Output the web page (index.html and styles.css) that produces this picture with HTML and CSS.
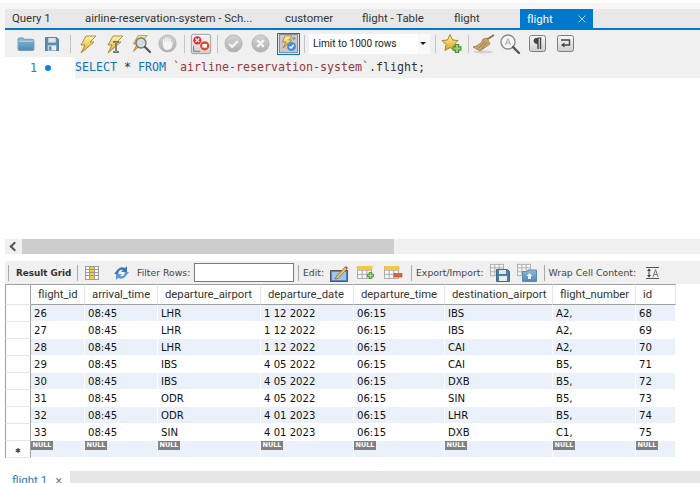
FILE: index.html
```html
<!DOCTYPE html>
<html lang="en">
<head>
<meta charset="utf-8">
<title>MySQL Workbench - flight</title>
<link rel="stylesheet" href="styles.css">
</head>
<body>
<svg class="defs" width="0" height="0" aria-hidden="true">
  <defs>
    <linearGradient id="gBolt" x1="0" y1="0" x2="0" y2="1"><stop offset="0" stop-color="#fff3a8"/><stop offset="1" stop-color="#e0a520"/></linearGradient>
    <linearGradient id="gBlue" x1="0" y1="0" x2="0" y2="1"><stop offset="0" stop-color="#8dbbd8"/><stop offset="1" stop-color="#4f88ae"/></linearGradient>
    <linearGradient id="gGray" x1="0" y1="0" x2="0" y2="1"><stop offset="0" stop-color="#d2d2d2"/><stop offset="1" stop-color="#b0b0b0"/></linearGradient>
    <linearGradient id="gBtn" x1="0" y1="0" x2="0" y2="1"><stop offset="0" stop-color="#f8f8f8"/><stop offset="1" stop-color="#cfcfcf"/></linearGradient>
    <symbol id="bolt" viewBox="0 0 24 24">
      <path d="M11 4H21L15 10H19L6 21L10 13H6Z" fill="url(#gBolt)" stroke="#a5843a" stroke-width=".9" stroke-linejoin="round"/>
    </symbol>
    <symbol id="gridmini" viewBox="0 0 16 14">
      <rect x=".5" y=".5" width="15" height="13" fill="#f4f4f4" stroke="#a8a8a8"/>
      <path d="M.5 4.500H15.500M.5 9H15.500M5.500 .5V13.500M10.500 .5V13.500" stroke="#a8a8a8" fill="none"/>
    </symbol>
  </defs>
</svg>

<div class="app">
  <div class="tabs-wrap">
    <nav class="tabs">
      <span class="tab t-query">Query 1</span>
      <span class="tab t-schema">airline-reservation-system - Sch...</span>
      <span class="tab t-customer">customer</span>
      <span class="tab t-table">flight - Table</span>
      <span class="tab t-flight">flight</span>
      <span class="tab t-active">flight<svg class="tab-close" width="8" height="8" viewBox="0 0 8 8"><path d="M.5 .5L7.500 7.500M7.500 .5L.5 7.500" stroke="#a9d3f2" fill="none"/></svg></span>
    </nav>
  </div>

  <div class="toolbar">
    <span class="btn btn-n"><svg width="18" height="15" viewBox="0 0 18 16"><path d="M.5 3.500Q.5 2 2 2H6L7.500 3.500H16Q17.500 3.500 17.500 5V14Q17.500 15.500 16 15.500H2Q.5 15.500 .5 14Z" fill="url(#gBlue)" stroke="#6f9cb9"/><path d="M1 5.500H17" stroke="#c4deed"/></svg></span>
    <span class="btn btn-n"><svg width="14" height="14" viewBox="0 0 15 15"><path d="M.5 .5H12.500L14.500 2.500V14.500H.5Z" fill="#5f8db0" stroke="#46749a"/><rect x="3.500" y="1" width="8" height="5" fill="#dbe6ee"/><rect x="3" y="9" width="9" height="5.500" fill="#e6eef4"/><rect x="4" y="10" width="3" height="4" fill="#5f8db0"/></svg></span>
    <span class="sep sep-a"></span>
    <span class="btn"><svg width="24" height="24"><use href="#bolt"/></svg></span>
    <span class="btn"><svg width="24" height="24" viewBox="0 0 24 24"><use href="#bolt" width="24" height="24"/><path d="M11 10H17M14 10V20M11 20H17" stroke="#444" stroke-width="1.800" fill="none"/><path d="M11 10H17M14 10V20M11 20H17" stroke="#eee" stroke-width=".6" fill="none"/></svg></span>
    <span class="btn"><svg width="24" height="24" viewBox="0 0 24 24"><use href="#bolt" x="-1" width="22" height="22"/><circle cx="12" cy="11" r="5" fill="#cfe2ee" fill-opacity=".85" stroke="#777" stroke-width="1.400"/><path d="M16 15L21 20" stroke="#555" stroke-width="2.200" stroke-linecap="round"/></svg></span>
    <span class="btn"><svg width="19" height="19" viewBox="0 0 20 20"><circle cx="10" cy="10" r="9" fill="url(#gGray)" stroke="#b4b4b4"/><path d="M6 9V6M8.200 9V4.500M10.400 9V4.500M12.600 9V5.500M6 8V12Q6.500 16 10 16Q14 16 14.500 11V9L12.600 10V9H6Z" stroke="#f4f4f4" stroke-width="1.600" stroke-linecap="round" fill="#f4f4f4"/></svg></span>
    <span class="sep"></span>
    <span class="btn"><svg width="22" height="22" viewBox="0 0 24 24"><rect x="1.500" y="1.500" width="21" height="21" rx="2" fill="url(#gBtn)" stroke="#9a9a9a"/><path d="M4 14V20H11" stroke="#777" fill="none"/><circle cx="8" cy="8" r="4.500" fill="#d8303a"/><circle cx="16" cy="14" r="5" fill="#e4482c"/><path d="M6 6L10 10M10 6L6 10" stroke="#fff" stroke-width="1.400"/><rect x="13.500" y="12" width="5" height="4" fill="#fff"/></svg></span>
    <span class="sep"></span>
    <span class="btn"><svg width="19" height="19" viewBox="0 0 20 20"><circle cx="10" cy="10" r="9" fill="url(#gGray)" stroke="#b4b4b4"/><path d="M5.500 10.500L8.500 13.500L14.500 7.500" stroke="#f4f4f4" stroke-width="2.500" fill="none"/></svg></span>
    <span class="btn"><svg width="19" height="19" viewBox="0 0 20 20"><circle cx="10" cy="10" r="9" fill="url(#gGray)" stroke="#b4b4b4"/><path d="M6.500 6.500L13.500 13.500M13.500 6.500L6.500 13.500" stroke="#f4f4f4" stroke-width="2.500"/></svg></span>
    <span class="btn btn-on"><svg width="19" height="19" viewBox="0 0 19 19"><rect x=".5" y=".5" width="18" height="18" fill="#c9c9c9" stroke="#8e8e8e"/><path d="M6 2H13L10 6H13L4 14L7 8H3.500Z" fill="url(#gBolt)" stroke="#8a6a20" stroke-width=".6"/><circle cx="12.500" cy="12.500" r="4.500" fill="#4d8fdc"/><path d="M10.500 12.500L12 14L14.700 11" stroke="#fff" stroke-width="1.300" fill="none"/><path d="M15 3V6M13.500 4.500H16.500" stroke="#58a648"/></svg></span>
    <span class="sep sep-b"></span>
    <span class="limit">Limit to 1000 rows<span class="limit-arrow"></span></span>
    <span class="sep sep-c"></span>
    <span class="btn"><svg width="22" height="22" viewBox="0 0 22 22"><path d="M9 1.500L11.500 7L17 7.500L13 11.500L14 17.500L9 14.500L4 17.500L5 11.500L1 7.500L6.500 7Z" fill="url(#gBolt)" stroke="#a98024"/><path d="M16 11V20M11.500 15.500H20.500" stroke="#4d8f3a" stroke-width="4.500"/><path d="M16 12V19M12.500 15.500H19.500" stroke="#9ad07c" stroke-width="2"/></svg></span>
    <span class="sep"></span>
    <span class="btn btn-n"><svg width="24" height="22" viewBox="0 0 24 22"><ellipse cx="11" cy="19" rx="10" ry="1.500" fill="#d0d0d0"/><path d="M22 2L14 7" stroke="#8a6f45" stroke-width="2"/><path d="M15 5L18 11L8 18L1 14Q9 12 11 6Z" fill="#c8a468" stroke="#94784a" stroke-width=".7"/><path d="M13 8L7 15M15 9L10 16" stroke="#94784a" stroke-width=".8"/></svg></span>
    <span class="btn btn-n"><svg width="22" height="22" viewBox="0 0 22 22"><circle cx="9" cy="9" r="7" fill="#f6f6f6" stroke="#8c8c8c" stroke-width="1.400"/><path d="M6.500 12L9 5.500L11.500 12M7.300 10H10.700" stroke="#a8a8a8" fill="none"/><path d="M14 14L20 20" stroke="#555" stroke-width="2.400" stroke-linecap="round"/></svg></span>
    <span class="btn btn-n btn-para"><svg width="17" height="17" viewBox="0 0 17 17"><rect x=".5" y=".5" width="16" height="16" rx="2" fill="url(#gBtn)" stroke="#7e7e7e"/><path d="M11.500 3V14M9 3V14" stroke="#444" stroke-width="1.400"/><path d="M9 3H12.500M8.500 3.200Q5 3.200 5 5.800Q5 8.500 8.500 8.500Z" fill="#444" stroke="#444"/></svg></span>
    <span class="btn btn-n btn-wrap"><svg width="17" height="17" viewBox="0 0 17 17"><rect x=".5" y=".5" width="16" height="16" rx="2" fill="url(#gBtn)" stroke="#7e7e7e"/><path d="M4 5H12.500V10H6" stroke="#444" stroke-width="1.400" fill="none"/><path d="M7.500 7.500V12.500L4 10Z" fill="#444"/></svg></span>
  </div>

  <section class="editor">
    <div class="code-line">
      <div class="gutter"><span class="line-no">1</span><span class="line-dot"></span></div>
      <code class="code"><span class="kw">SELECT</span> * <span class="kw">FROM</span> <span class="str">`airline-reservation-system`</span>.flight;</code>
    </div>
  </section>

  <div class="hscroll"><span class="hscroll-arrow"></span><span class="hscroll-thumb"></span></div>

  <div class="result-bar">
    <span class="rsep rsep-first"></span>
    <b class="rb-title">Result Grid</b>
    <span class="rsep"></span>
    <span class="ricon ricon-grid"><svg width="14" height="14" viewBox="0 0 14 14"><rect x=".5" y=".5" width="13" height="13" fill="#fff" stroke="#9a9a9a"/><rect x="5" y="1" width="4" height="12" fill="#f6c83c"/><path d="M.5 3.500H13.500M.5 6.500H13.500M.5 9.500H13.500M4.500 .5V13.500M9.500 .5V13.500" stroke="#9a9a9a" fill="none"/></svg></span>
    <span class="ricon ricon-refresh"><svg width="17" height="16" viewBox="0 0 17 16"><path d="M1 9L5 4Q8 1 12 3L14 1V7H8L10 5Q8 4 6 6L5 9Z" fill="#3a78b8"/><path d="M16 7L12 12Q9 15 5 13L3 15V9H9L7 11Q9 12 11 10L12 7Z" fill="#5b9ad4"/></svg></span>
    <span class="rlabel rl-filter">Filter Rows:</span>
    <input class="filter" type="text" aria-label="Filter Rows">
    <span class="rsep"></span>
    <span class="rlabel rl-edit">Edit:</span>
    <span class="ricon ricon-edit"><svg width="19" height="18" viewBox="0 0 19 18"><rect x=".5" y="6.500" width="17" height="11" fill="#4f8ac4" stroke="#555"/><rect x="2" y="8" width="14" height="8" fill="#9cc4e8"/><path d="M6 13L15 3L17 5L8 14.500L5 15Z" fill="#f2c25c" stroke="#7a6030" stroke-width=".7"/><path d="M15 3L16 2L18 4L17 5Z" fill="#d84a3a"/></svg></span>
    <span class="ricon ricon-add"><svg width="19" height="15" viewBox="0 0 19 15"><use href="#gridmini" width="15" height="13" y="1"/><rect x=".5" y="1" width="15" height="4" fill="#f4c83a"/><path d="M13.500 7V14M10 10.500H17" stroke="#5c9a45" stroke-width="3.400"/><path d="M13.500 8V13M11 10.500H16" stroke="#a8d88c" stroke-width="1.200"/></svg></span>
    <span class="ricon ricon-add"><svg width="19" height="15" viewBox="0 0 19 15"><use href="#gridmini" width="15" height="13" y="1"/><rect x=".5" y="1" width="15" height="4" fill="#f4c83a"/><rect x="10" y="8.500" width="8" height="3.500" fill="#d8643c" stroke="#b04a28" stroke-width=".6"/></svg></span>
    <span class="rsep rsep-edit"></span>
    <span class="rlabel rl-after">Export/Import:</span>
    <span class="ricon ricon-exp"><svg width="20" height="19" viewBox="0 0 20 19"><use href="#gridmini" width="14" height="14"/><path d="M6.500 6.500H17.500L19.500 8.500V18.500H6.500Z" fill="#4e7fa3" stroke="#3d6a8c"/><rect x="9" y="7" width="7" height="4" fill="#dbe6ee"/><rect x="9" y="13" width="8" height="5" fill="#e6eef4"/></svg></span>
    <span class="ricon ricon-imp"><svg width="20" height="19" viewBox="0 0 20 19"><use href="#gridmini" width="14" height="14"/><path d="M5.500 8.500H10L11 7H19.500V18.500H5.500Z" fill="url(#gBlue)" stroke="#5c8cab"/><path d="M12.500 10L15.500 13H14V16H11V13H9.500Z" fill="#e8f2f8"/></svg></span>
    <span class="rsep rsep-imp"></span>
    <span class="rlabel rl-after">Wrap Cell Content:</span>
    <span class="ricon ricon-wrapc"><svg width="13" height="12" viewBox="0 0 13 12"><path d="M0 .5H13M0 11.500H13" stroke="#555"/><path d="M3 2V10" stroke="#444"/><path d="M3 1.500L5 4H1ZM3 10.500L5 8H1Z" fill="#444"/><path d="M7 10L9.500 2.500L12 10M8 7.500H11" stroke="#777" fill="none"/></svg></span>
  </div>

  <table class="grid">
    <colgroup>
      <col class="c-row"><col class="c-1"><col class="c-2"><col class="c-3"><col class="c-4"><col class="c-5"><col class="c-6"><col class="c-7"><col class="c-8">
    </colgroup>
    <thead>
      <tr><th class="rownum"></th><th>flight_id</th><th>arrival_time</th><th>departure_airport</th><th>departure_date</th><th>departure_time</th><th>destination_airport</th><th>flight_number</th><th>id</th></tr>
    </thead>
    <tbody>
      <tr><td class="rownum"></td><td>26</td><td>08:45</td><td>LHR</td><td>1 12 2022</td><td>06:15</td><td>IBS</td><td>A2,</td><td>68</td></tr>
      <tr><td class="rownum"></td><td>27</td><td>08:45</td><td>LHR</td><td>1 12 2022</td><td>06:15</td><td>IBS</td><td>A2,</td><td>69</td></tr>
      <tr><td class="rownum"></td><td>28</td><td>08:45</td><td>LHR</td><td>1 12 2022</td><td>06:15</td><td>CAI</td><td>A2,</td><td>70</td></tr>
      <tr><td class="rownum"></td><td>29</td><td>08:45</td><td>IBS</td><td>4 05 2022</td><td>06:15</td><td>CAI</td><td>B5,</td><td>71</td></tr>
      <tr><td class="rownum"></td><td>30</td><td>08:45</td><td>IBS</td><td>4 05 2022</td><td>06:15</td><td>DXB</td><td>B5,</td><td>72</td></tr>
      <tr><td class="rownum"></td><td>31</td><td>08:45</td><td>ODR</td><td>4 05 2022</td><td>06:15</td><td>SIN</td><td>B5,</td><td>73</td></tr>
      <tr><td class="rownum"></td><td>32</td><td>08:45</td><td>ODR</td><td>4 01 2023</td><td>06:15</td><td>LHR</td><td>B5,</td><td>74</td></tr>
      <tr><td class="rownum"></td><td>33</td><td>08:45</td><td>SIN</td><td>4 01 2023</td><td>06:15</td><td>DXB</td><td>C1,</td><td>75</td></tr>
      <tr class="new-row"><td class="rownum"><span class="star">✱</span></td><td><span class="null">NULL</span></td><td><span class="null">NULL</span></td><td><span class="null">NULL</span></td><td><span class="null">NULL</span></td><td><span class="null">NULL</span></td><td><span class="null">NULL</span></td><td><span class="null">NULL</span></td><td><span class="null">NULL</span></td></tr>
    </tbody>
  </table>

  <footer class="bottom-tabs">
    <span class="btab">flight 1<span class="btab-close">✕</span></span>
    <span class="btab-rest"></span>
  </footer>
</div>
</body>
</html>
```

FILE: styles.css
```css
* { box-sizing: border-box; }
html, body { margin: 0; padding: 0; background: #fff; }
.defs { position: absolute; }
.app {
  width: 700px;
  height: 483px;
  overflow: hidden;
  display: flex;
  flex-direction: column;
  background: #fff;
  font-family: Roboto, "Open Sans", sans-serif;
  color: #222;
}

/* top tabs */
.tabs-wrap {
  margin-top: 3px;
  padding: 6px 0 0 5px;
  background: #f6f6f6;
}
.tabs {
  height: 21px;
  display: flex;
  background: #e8e8e8;
  border-bottom: 2px solid #0078cc;
  font-size: 11.4px;
  line-height: 18px;
  color: #333;
}
.tab { padding-left: 7px; height: 19px; white-space: nowrap; overflow: hidden; }
.t-query { width: 73px; }
.t-schema { width: 200px; }
.t-customer { width: 77px; }
.t-table { width: 92px; }
.t-flight { width: 73px; }
.t-active {
  width: 73px;
  background: #0078cc;
  color: #fff;
  display: flex;
  align-items: center;
  justify-content: space-between;
  padding-right: 7px;
}
.tab-close { display: block; }

/* sql toolbar */
.toolbar {
  height: 27px;
  margin-left: 5px;
  padding-left: 8px;
  display: flex;
  align-items: center;
  background: #f0f0f0;
}
.btn {
  flex: none;
  width: 27px;
  height: 27px;
  display: flex;
  align-items: center;
  justify-content: center;
}
.btn svg { display: block; }
.btn-n { width: 26px; }
.btn-on {
  width: 23px;
  height: 22px;
  margin-left: 3px;
  border: 1px solid #0078d7;
  background: #dfe6ec;
}
.btn-para { margin-left: 1px; }
.btn-wrap { margin-left: 2px; }
.sep {
  flex: none;
  width: 1px;
  height: 18px;
  margin: 0 2px 0 3px;
  background: #c4c4c4;
}
.sep-a { margin-left: 5px; }
.sep-b { margin: 0 4px; }
.sep-c { margin: 0 2px 0 5px; }
.limit {
  flex: none;
  width: 121px;
  height: 20px;
  padding-left: 4px;
  display: flex;
  align-items: center;
  justify-content: space-between;
  background: #fff;
  font-size: 10.1px;
  color: #222;
}
.limit-arrow {
  width: 12px;
  height: 20px;
  background: #f8f8f8;
  position: relative;
}
.limit-arrow::after {
  content: "";
  position: absolute;
  left: 2px;
  top: 8px;
  border: 3.500px solid transparent;
  border-top-color: #222;
  border-bottom: 0;
}

/* editor */
.editor { height: 182px; margin-left: 5px; background: #fff; }
.code-line { display: flex; height: 21px; }
.gutter { width: 70px; flex: none; display: flex; align-items: center; }
.line-no {
  margin-left: 25px;
  font: 11.6px "DejaVu Sans Mono", monospace;
  color: #2c78b4;
}
.line-dot { margin-left: 8px; width: 6px; height: 6px; border-radius: 50%; background: #0a84e0; }
.code {
  flex: 1;
  background: #f0f0f0;
  font: 11.63px/21px "DejaVu Sans Mono", monospace;
  color: #333;
  white-space: pre;
}
.kw { color: #1473b5; }
.str { color: #8f3b3b; }

/* horizontal scrollbar */
.hscroll { height: 15px; margin-left: 5px; display: flex; background: #f0f0f0; }
.hscroll-arrow { width: 17px; position: relative; }
.hscroll-arrow::after {
  content: "";
  position: absolute;
  left: 6px;
  top: 4px;
  width: 5px;
  height: 5px;
  border-left: 2px solid #555;
  border-bottom: 2px solid #555;
  transform: rotate(45deg);
}
.hscroll-thumb { width: 372px; background: #cdcdcd; }

/* result toolbar */
.result-bar {
  margin: 7px 0 0 5px;
  height: 23px;
  display: flex;
  align-items: center;
  background: #f0f0f0;
  font-family: "DejaVu Sans", sans-serif;
  color: #444;
  font-size: 9.3px;
  white-space: nowrap;
}
.rsep { flex: none; width: 1px; height: 16px; background: #a9a9a9; }
.rsep-first { margin-left: 3px; }
.rb-title { flex: none; width: 55px; margin: 0 6px 0 7px; color: #333; font-size: 8.8px; }
.rlabel { flex: none; }
.ricon { flex: none; display: flex; align-items: center; }
.ricon svg { display: block; }
.ricon-grid { margin-left: 7px; }
.ricon-refresh { margin-left: 14px; }
.rl-filter { width: 52px; margin-left: 7px; }
.filter {
  flex: none;
  width: 100px;
  height: 19px;
  margin: 0 4px 0 5px;
  padding: 0;
  border: 1px solid #7a7a7a;
  background: #fff;
}
.rl-edit { width: 20px; margin-left: 4px; }
.ricon-edit { margin-left: 7px; }
.ricon-add { margin-left: 8px; }
.rsep-edit { margin-left: 8px; }
.rl-after { margin-left: 4px; }
.ricon-exp { margin-left: 6px; }
.ricon-imp { margin-left: 7px; }
.rsep-imp { margin-left: 7px; }
.ricon-wrapc { margin-left: 10px; }

/* data grid */
.grid {
  margin-left: 5px;
  width: 671px;
  flex: none;
  table-layout: fixed;
  border-collapse: separate;
  border-spacing: 0;
  font-family: "DejaVu Sans", sans-serif;
  font-size: 10.1px;
  color: #111;
}
.c-row { width: 26px; }
.c-1 { width: 54px; }
.c-2 { width: 73px; }
.c-3 { width: 103px; }
.c-4 { width: 93px; }
.c-5 { width: 91px; }
.c-6 { width: 108px; }
.c-7 { width: 83px; }
.c-8 { width: 40px; }
.grid th {
  height: 21px;
  padding: 0 0 0 7px;
  text-align: left;
  font-family: Roboto, sans-serif;
  font-size: 11.3px;
  font-weight: 400;
  color: #333;
  background: #fff;
  border-top: 1px solid #a0a0a0;
  border-bottom: 1px solid #a0a0a0;
  border-right: 1px solid #e6e6e6;
}
.grid td {
  height: 17px;
  padding: 1px 0 0 3px;
  border-right: 1px solid #fff;
  border-bottom: 1px solid #fff;
  white-space: nowrap;
  line-height: 15px;
}
.grid tbody tr:nth-child(odd) td { background: #eaf1fb; }
.grid tbody .new-row td { vertical-align: top; padding: 0; }
.grid .rownum,
.grid tbody tr:nth-child(odd) td.rownum {
  background: #fff;
  padding: 0;
  border-left: 1px solid #a0a0a0;
  border-right: 1px solid #a0a0a0;
  border-bottom: 1px solid #e6e6e6;
  text-align: center;
}
.null {
  display: block;
  width: 22px;
  height: 9px;
  background: #808080;
  color: #fff;
  font: 700 6.500px/9px "DejaVu Sans", sans-serif;
  text-align: center;
}
.grid .new-row td.rownum { vertical-align: bottom; }
.star { font-size: 7px; line-height: 11px; color: #444; display: block; }

/* bottom tabs */
.bottom-tabs {
  margin-top: auto;
  height: 12px;
  display: flex;
  flex: none;
}
.btab {
  width: 70px;
  padding: 2px 0 0 12px;
  font-size: 11.5px;
  line-height: 14px;
  color: #1f78c1;
  white-space: nowrap;
  overflow: hidden;
}
.btab-close { margin-left: 8px; font-size: 9px; color: #666; }
.btab-rest { flex: 1; background: #e6e6e6; }
```
